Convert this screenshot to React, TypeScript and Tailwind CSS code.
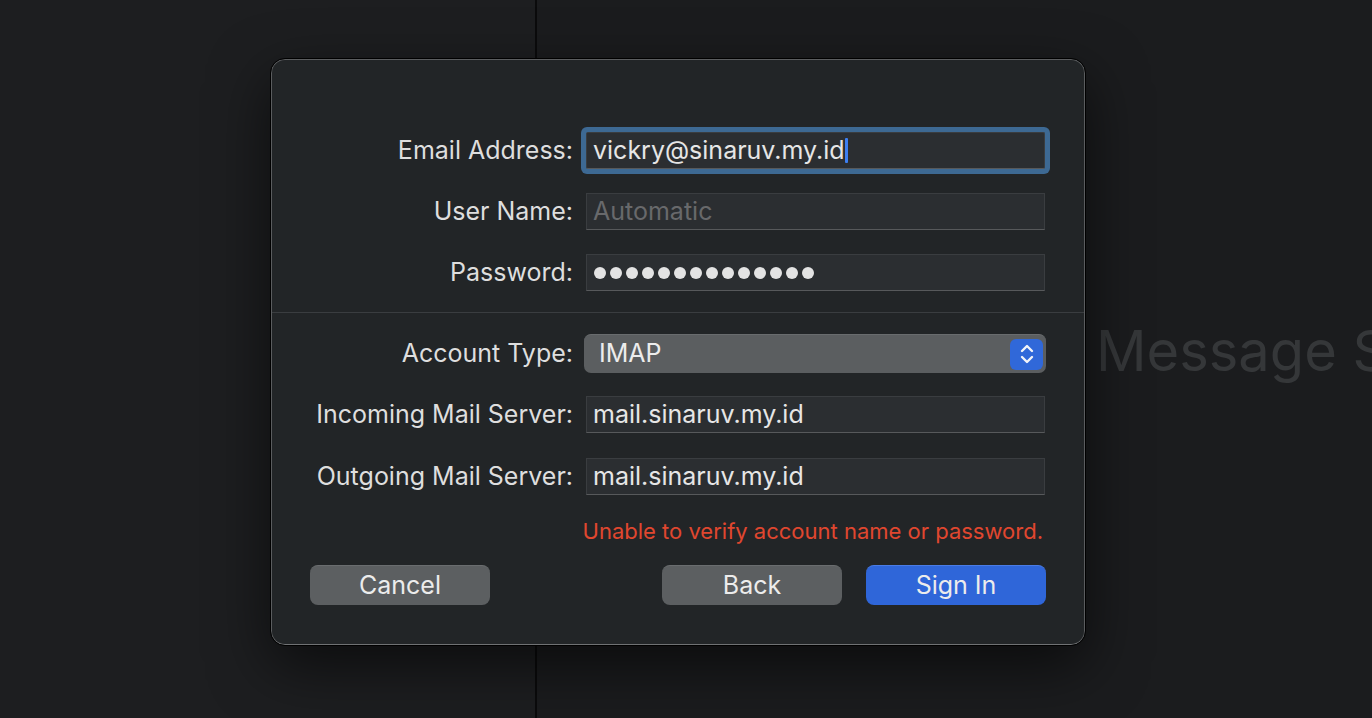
import React from 'react';

const font = { fontFamily: 'Inter, "Noto Sans", sans-serif' };

function Label({ children }: { children: React.ReactNode }) {
  return (
    <div className="w-[301px] pr-[13px] text-right text-[25px] text-[#dedede] box-content leading-none">
      {children}
    </div>
  );
}

function Field({ children, focused }: { children?: React.ReactNode; focused?: boolean }) {
  return (
    <div
      className={
        'w-[459px] h-[37px] flex items-center px-[6px] bg-[#2b2e31] border border-[#3a3d40] border-b-[#57595b] text-[25px] text-[#e6e6e6] ' +
        (focused ? 'ring-[5px] ring-[#3d6993] rounded-[2px]' : '')
      }
    >
      {children}
    </div>
  );
}

function Row({ label, children, className }: { label: string; children: React.ReactNode; className?: string }) {
  return (
    <div className={'flex items-center ' + (className ?? '')}>
      <Label>{label}</Label>
      {children}
    </div>
  );
}

function Stepper() {
  return (
    <div className="w-[33px] h-[31px] rounded-[6px] bg-[#3068d9] flex items-center justify-center">
      <svg width="14" height="22" viewBox="0 0 14 22" fill="none" stroke="#f2f4f8" strokeWidth="2.4" strokeLinecap="round" strokeLinejoin="round">
        <path d="M2 8 L7 3 L12 8" />
        <path d="M2 14 L7 19 L12 14" />
      </svg>
    </div>
  );
}

function Button({ children, primary }: { children: React.ReactNode; primary?: boolean }) {
  return (
    <button
      className={
        'w-[180px] h-[40px] rounded-[8px] text-[25px] text-[#ececec] ' +
        (primary ? 'bg-[#2f66d9] border-t border-[#4a7ce6]' : 'bg-[#5c5f61] border-t border-[#6a6d6f]')
      }
    >
      {children}
    </button>
  );
}

export default function App() {
  return (
    <div className="relative w-[1372px] h-[718px] overflow-hidden flex bg-[#1c1d1f]" style={font}>
      <div className="w-[535px] h-full bg-[#1d1e20]" />
      <div className="w-[2px] h-full bg-[#0b0b0c]" />
      {/* empty reading pane */}
      <div className="flex-1 h-full bg-[#1b1c1e] overflow-hidden pt-[323px] pl-[559px]">
        <div className="whitespace-nowrap text-[56px] text-[#353739] leading-none">Message Selected</div>
      </div>

      {/* account sheet */}
      <div className="absolute left-[271px] top-[59px] w-[814px] h-[586px] rounded-[14px] bg-[#222527] border border-[#5b5d5f] border-b-[#707274] outline outline-1 outline-black shadow-[0_20px_60px_rgba(0,0,0,0.6)] pt-[72px] flex flex-col">
        <div className="flex flex-col gap-[24px]">
          <Row label="Email Address:">
            <Field focused>
              <span>vickry@sinaruv.my.id</span>
              <span className="w-[3px] h-[25px] bg-[#3d7ff0] rounded-[1px]" />
            </Field>
          </Row>
          <Row label="User Name:">
            <Field>
              <span className="text-[#68696b]">Automatic</span>
            </Field>
          </Row>
          <Row label="Password:">
            <Field>
              <div className="flex gap-[4px] pl-[1px]">
                {Array.from({ length: 14 }).map((_, i) => (
                  <span key={i} className="w-[12px] h-[12px] rounded-full bg-[#e3e3e3]" />
                ))}
              </div>
            </Field>
          </Row>
        </div>

        <div className="mt-[21px] h-px bg-[#3a3d40]" />

        <Row label="Account Type:" className="mt-[21px]">
          <div className="-ml-[2px] w-[462px] h-[39px] rounded-[7px] bg-[#5b5e60] border-t border-[#696c6e] flex items-center justify-between pl-[15px] pr-[3px]">
            <span className="text-[25px] text-[#ececec]">IMAP</span>
            <Stepper />
          </div>
        </Row>

        <Row label="Incoming Mail Server:" className="mt-[23px]">
          <Field>mail.sinaruv.my.id</Field>
        </Row>
        <Row label="Outgoing Mail Server:" className="mt-[25px]">
          <Field>mail.sinaruv.my.id</Field>
        </Row>

        <div className="mt-[24px] pr-[41px] text-right text-[22px] leading-[24px] text-[#e0472f]">
          Unable to verify account name or password.
        </div>

        <div className="mt-[22px] px-[38px] flex items-center">
          <Button>Cancel</Button>
          <div className="ml-auto flex gap-[24px]">
            <Button>Back</Button>
            <Button primary>Sign In</Button>
          </div>
        </div>
      </div>
    </div>
  );
}
